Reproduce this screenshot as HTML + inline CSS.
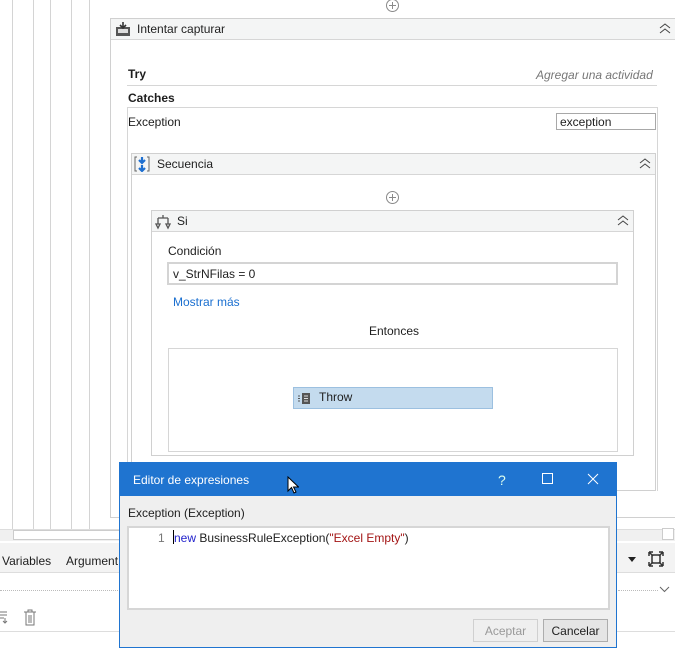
<!DOCTYPE html>
<html><head><meta charset="utf-8"><style>
*{margin:0;padding:0;box-sizing:border-box}
body{width:675px;height:648px;overflow:hidden;background:#fff;font-family:"Liberation Sans",sans-serif;font-size:12px;color:#1e1e1e;position:relative}
.a{position:absolute}
.vl{position:absolute;top:0;width:1px;height:530px;background:#d4d4d4}
.box{position:absolute;border:1px solid #d0d0d0;background:#fff}
.hdr{position:absolute;left:0;right:0;top:0;height:21px;background:#f4f5f5;border-bottom:1px solid #d6d6d6}
.chev{position:absolute;right:4px;top:3px}
.plus{position:absolute;width:13px;height:13px}
</style></head><body>
<div class="vl" style="left:12px"></div><div class="vl" style="left:33px"></div><div class="vl" style="left:50px"></div><div class="vl" style="left:71px"></div><div class="vl" style="left:89px"></div>

<svg class="plus" style="left:386px;top:-1px" viewBox="0 0 13 13"><circle cx="6.5" cy="6.5" r="6" fill="none" stroke="#8a8a8a"/><path d="M6.5 3v7M3 6.5h7" stroke="#8a8a8a"/></svg>

<div class="box" style="left:110px;top:18px;width:570px;height:500px;border-right:none">
 <div class="hdr"><svg class="a" style="left:4px;top:2px" width="16" height="16" viewBox="0 0 16 16"><rect x="1" y="6" width="14" height="9" fill="#555"/><rect x="3" y="8" width="10" height="4" fill="#ddd"/><path d="M8 1v6M5 4l3 3 3-3" stroke="#333" stroke-width="1.6" fill="none"/></svg>
 <span class="a" style="left:26px;top:3px">Intentar capturar</span>
 <svg class="chev" style="right:9px" width="12" height="12" viewBox="0 0 12 12"><path d="M1 6l5-4 5 4M1 11l5-4 5 4" stroke="#444" fill="none"/></svg></div>
</div>
<div class="a" style="left:128px;top:67px;font-weight:bold">Try</div>
<div class="a" style="left:536px;top:68px;font-style:italic;color:#777">Agregar una actividad</div>
<div class="a" style="left:127px;top:85px;width:530px;height:1px;background:#d6d6d6"></div>
<div class="a" style="left:128px;top:91px;font-weight:bold">Catches</div>
<div class="a" style="left:127px;top:107px;width:531px;height:384px;border:1px solid #d6d6d6;border-bottom:none"></div>
<div class="a" style="left:128px;top:115px">Exception</div>
<div class="a" style="left:556px;top:113px;width:100px;height:17px;border:1px solid #a8a8a8;padding:1px 3px">exception</div>

<div class="box" style="left:131px;top:153px;width:525px;height:338px">
 <div class="hdr"><svg class="a" style="left:2px;top:2px" width="16" height="16" viewBox="0 0 16 16"><path d="M3 1H1v14h2M13 1h2v14h-2" stroke="#666" fill="none"/><path d="M8 1v5M5 4l3 3 3-3M8 9v5M5 12l3 3 3-3" stroke="#1e6fd0" stroke-width="2.2" fill="none"/></svg>
 <span class="a" style="left:25px;top:3px">Secuencia</span>
 <svg class="chev" width="12" height="12" viewBox="0 0 12 12"><path d="M1 6l5-4 5 4M1 11l5-4 5 4" stroke="#444" fill="none"/></svg></div>
</div>
<svg class="plus" style="left:386px;top:191px" viewBox="0 0 13 13"><circle cx="6.5" cy="6.5" r="6" fill="none" stroke="#8a8a8a"/><path d="M6.5 3v7M3 6.5h7" stroke="#8a8a8a"/></svg>

<div class="box" style="left:151px;top:210px;width:483px;height:246px">
 <div class="hdr"><svg class="a" style="left:3px;top:3px" width="16" height="16" viewBox="0 0 16 16"><path d="M8 1v3M3 4h10M3 4v6M13 4v6M1 10h4l-2 4zM11 10h4l-2 4z" stroke="#555" stroke-width="1.3" fill="none"/></svg>
 <span class="a" style="left:25px;top:3px">Si</span>
 <svg class="chev" width="12" height="12" viewBox="0 0 12 12"><path d="M1 6l5-4 5 4M1 11l5-4 5 4" stroke="#444" fill="none"/></svg></div>
</div>
<div class="a" style="left:168px;top:244px">Condición</div>
<div class="a" style="left:167px;top:262px;width:451px;height:23px;border:2px solid #d4d4d4;padding:3px 4px">v_StrNFilas = 0</div>
<div class="a" style="left:173px;top:295px;color:#1a6fd0">Mostrar más</div>
<div class="a" style="left:369px;top:324px">Entonces</div>
<div class="a" style="left:168px;top:348px;width:450px;height:104px;border:1px solid #d6d6d6"></div>
<div class="a" style="left:293px;top:387px;width:200px;height:22px;background:#c4dbee;border:1px solid #9cc0e0">
 <svg class="a" style="left:3px;top:4px" width="14" height="13" viewBox="0 0 14 13"><rect x="5" y="1" width="8" height="11" fill="#555"/><path d="M7 4h4M7 6.5h4M7 9h4" stroke="#ddd"/><path d="M1 4h2M1 6.5h2M1 9h2" stroke="#555"/></svg>
 <span class="a" style="left:25px;top:2px">Throw</span></div>

<!-- bottom left panel -->
<div class="a" style="left:0;top:529px;width:675px;height:12px;background:#f0f0f0;border-top:1px solid #ddd"></div>
<div class="a" style="left:13px;top:530px;width:110px;height:10px;background:#fff;border:1px solid #ccc"></div>
<div class="a" style="left:0;top:543px;width:675px;height:30px;background:#f3f3f3;border-bottom:1px solid #ddd"></div>
<div class="a" style="left:2px;top:554px">Variables</div>
<div class="a" style="left:66px;top:554px">Argument</div>
<div class="a" style="left:0;top:590px;width:120px;border-top:1px dotted #bbb"></div>
<div class="a" style="left:0;top:631px;width:675px;height:1px;background:#ddd"></div>
<svg class="a" style="left:0;top:609px" width="10" height="16" viewBox="0 0 10 16"><path d="M0 3h7M0 6h7M0 9h4M5 9v5M3 12l2 2 2-2" stroke="#777" fill="none"/></svg>
<svg class="a" style="left:23px;top:608px" width="14" height="18" viewBox="0 0 14 18"><path d="M1 4h12M5 4V2h4v2M3 4v13h8V4M6 7v8M8 7v8" stroke="#777" fill="none"/></svg>
<div class="a" style="left:628px;top:557px;border:4px solid transparent;border-top:5px solid #222;width:0"></div>
<svg class="a" style="left:648px;top:551px" width="16" height="16" viewBox="0 0 16 16"><rect x="4" y="4" width="8" height="8" fill="none" stroke="#333" stroke-width="1.5"/><path d="M1 1l4 4M15 1l-4 4M1 15l4-4M15 15l-4-4M1 1h4M1 1v4M15 1h-4M15 1v4M1 15h4M1 15v-4M15 15h-4M15 15v-4" stroke="#333" stroke-width="1.5"/></svg>
<div class="a" style="left:618px;top:590px;width:40px;border-top:1px dotted #bbb"></div>
<svg class="a" style="left:659px;top:586px" width="11" height="8" viewBox="0 0 11 8"><path d="M1 1l4.5 4.5L10 1" stroke="#666" fill="none"/></svg>
<div class="a" style="left:662px;top:528px;width:12px;height:12px;border:1px solid #ccc;background:#fff"></div>

<!-- dialog -->
<div class="a" style="left:119px;top:462px;width:498px;height:186px;background:#efefef;border:1px solid #1f74d0">
 <div class="a" style="left:0;top:0;width:496px;height:33px;background:#1f74d0;color:#fff">
  <span class="a" style="left:13px;top:10px">Editor de expresiones</span>
  <span class="a" style="left:378px;top:9px;font-size:14px;color:#dfe">?</span>
  <div class="a" style="left:422px;top:10px;width:11px;height:11px;border:1px solid #fff"></div>
  <svg class="a" style="left:467px;top:10px" width="12" height="12" viewBox="0 0 12 12"><path d="M1 1l10 10M11 1L1 11" stroke="#fff"/></svg>
 </div>
 <svg class="a" style="left:167px;top:13px" width="12" height="18" viewBox="0 0 12 18"><path d="M1 1v14l3.5-3.5 2.5 5.5 2-1-2.5-5h5z" fill="#fff" stroke="#000"/></svg>
 <div class="a" style="left:8px;top:43px">Exception (Exception)</div>
 <div class="a" style="left:7px;top:63px;width:483px;height:84px;background:#fff;border:2px solid #d6d6d6">
  <span class="a" style="left:29px;top:3px;color:#777">1</span>
  <div class="a" style="left:44px;top:2px;width:1px;height:14px;background:#000"></div>
  <span class="a" style="left:45px;top:3px"><span style="color:#2222cc">new</span> BusinessRuleException(<span style="color:#a31515">"Excel Empty"</span>)</span>
 </div>
 <div class="a" style="left:353px;top:156px;width:65px;height:23px;border:1px solid #d0d0d0;color:#999;text-align:center;padding-top:4px">Aceptar</div>
 <div class="a" style="left:423px;top:156px;width:65px;height:23px;border:1px solid #adadad;background:#e5e5e5;text-align:center;padding-top:4px">Cancelar</div>
</div>
</body></html>
